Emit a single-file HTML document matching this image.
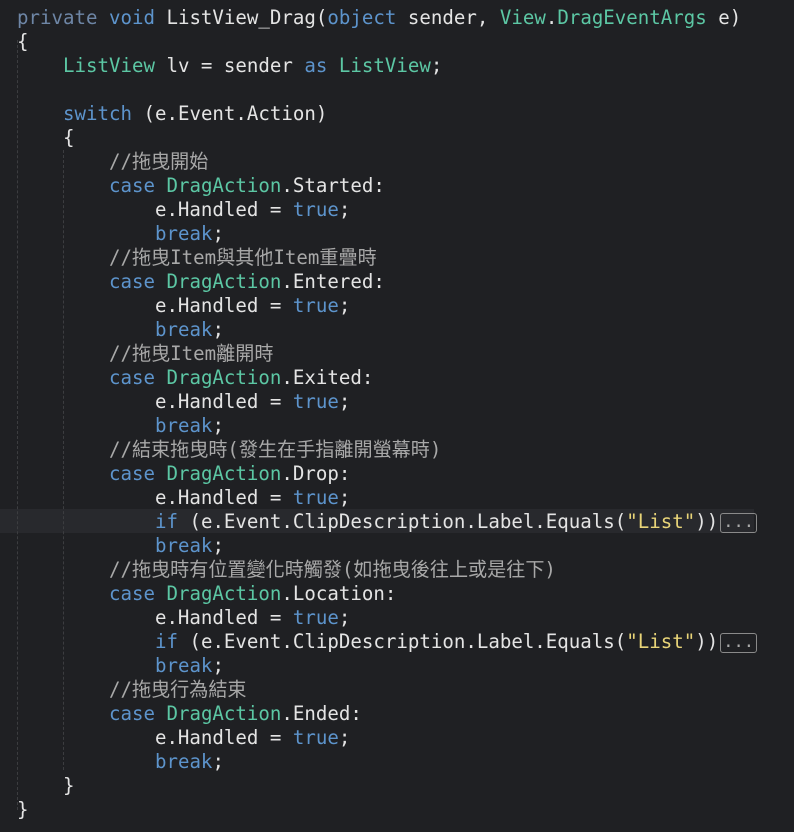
<!DOCTYPE html>
<html><head><meta charset="utf-8"><style>
html,body{margin:0;padding:0;background:#1f2023;width:794px;height:832px;overflow:hidden}
pre{margin:0;position:absolute;left:17px;top:6px;font-family:"DejaVu Sans Mono","Noto Sans CJK TC",monospace;font-size:19.1px;line-height:24px;color:#e4e4e4;white-space:pre}
.k{color:#5d94cc}.p{color:#6e86a6}.t{color:#5cc7a4}.s{color:#e8d478}.c{color:#a8a8a8}
.hl{position:absolute;left:0;top:509px;width:754px;height:24px;background:#28292d}
.f{display:inline-block;border:1px solid #8a8a8a;border-radius:3px;color:#aaa;line-height:16px;height:18px;vertical-align:middle;margin-left:2px;padding:0 2px;font-size:17px;letter-spacing:0}
.g{position:absolute;width:0;border-left:1px dashed #3c3d40}
</style></head><body>
<div class="hl"></div>
<div class="g" style="left:17px;top:40px;height:770px"></div>
<div class="g" style="left:63px;top:150px;height:620px"></div>
<pre><span class="p">private</span> <span class="k">void</span> ListView_Drag(<span class="k">object</span> sender, <span class="t">View</span>.<span class="t">DragEventArgs</span> e)
{
    <span class="t">ListView</span> lv = sender <span class="k">as</span> <span class="t">ListView</span>;

    <span class="k">switch</span> (e.Event.Action)
    {
        <span class="c">//拖曳開始</span>
        <span class="k">case</span> <span class="t">DragAction</span>.Started:
            e.Handled = <span class="k">true</span>;
            <span class="k">break</span>;
        <span class="c">//拖曳Item與其他Item重疊時</span>
        <span class="k">case</span> <span class="t">DragAction</span>.Entered:
            e.Handled = <span class="k">true</span>;
            <span class="k">break</span>;
        <span class="c">//拖曳Item離開時</span>
        <span class="k">case</span> <span class="t">DragAction</span>.Exited:
            e.Handled = <span class="k">true</span>;
            <span class="k">break</span>;
        <span class="c">//結束拖曳時(發生在手指離開螢幕時)</span>
        <span class="k">case</span> <span class="t">DragAction</span>.Drop:
            e.Handled = <span class="k">true</span>;
            <span class="k">if</span> (e.Event.ClipDescription.Label.Equals(<span class="s">"List"</span>))<span class="f">...</span>
            <span class="k">break</span>;
        <span class="c">//拖曳時有位置變化時觸發(如拖曳後往上或是往下)</span>
        <span class="k">case</span> <span class="t">DragAction</span>.Location:
            e.Handled = <span class="k">true</span>;
            <span class="k">if</span> (e.Event.ClipDescription.Label.Equals(<span class="s">"List"</span>))<span class="f">...</span>
            <span class="k">break</span>;
        <span class="c">//拖曳行為結束</span>
        <span class="k">case</span> <span class="t">DragAction</span>.Ended:
            e.Handled = <span class="k">true</span>;
            <span class="k">break</span>;
    }
}</pre>
</body></html>
